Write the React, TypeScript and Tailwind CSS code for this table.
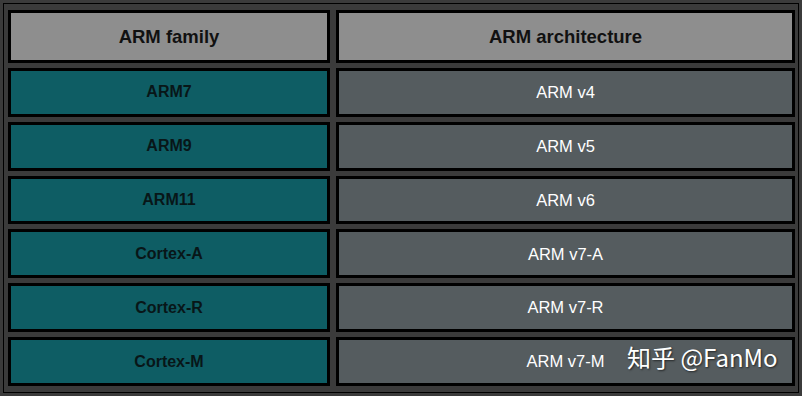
const rows = [
  { family: "ARM7", arch: "ARM v4" },
  { family: "ARM9", arch: "ARM v5" },
  { family: "ARM11", arch: "ARM v6" },
  { family: "Cortex-A", arch: "ARM v7-A" },
  { family: "Cortex-R", arch: "ARM v7-R" },
  { family: "Cortex-M", arch: "ARM v7-M" },
];

export default function App() {
  return (
    <div className="relative h-[396px] w-[802px] bg-[#3b3b3b] p-[3px] font-['Liberation_Sans',Arial,sans-serif]">
      <div className="h-full w-full border border-black bg-[#3b3b3b] pb-[6px] pl-[4px] pr-[3px] pt-[6px]">
        <div className="grid h-full grid-cols-[322px_459px] grid-rows-[53px_repeat(6,1fr)] gap-x-[6px] gap-y-[5px]">
          <div className="flex items-center justify-center border-[3px] border-black bg-[#8e8e8e] text-[18.5px] font-bold text-[#111]">
            ARM family
          </div>
          <div className="flex items-center justify-center border-[3px] border-black bg-[#8e8e8e] text-[18.5px] font-bold text-[#111]">
            ARM architecture
          </div>
          {rows.map((r) => (
            <Row key={r.family} family={r.family} arch={r.arch} />
          ))}
        </div>
      </div>
      <div className="absolute left-[627px] top-[345px] font-['Noto_Sans_CJK_SC','Noto_Sans',sans-serif] text-[24px] leading-none text-white [text-shadow:1px_1px_2px_rgba(0,0,0,0.6)]">
        知乎 @FanMo
      </div>
    </div>
  );
}

const Row = ({ family, arch }: { family: string; arch: string }) => (
  <>
    <div className="flex items-center justify-center border-[3px] border-black bg-[#0e5d64] text-[16px] font-bold text-[#081618]">
      {family}
    </div>
    <div className="flex items-center justify-center border-[3px] border-black bg-[#555c5f] text-[16.5px] text-white">
      {arch}
    </div>
  </>
);
